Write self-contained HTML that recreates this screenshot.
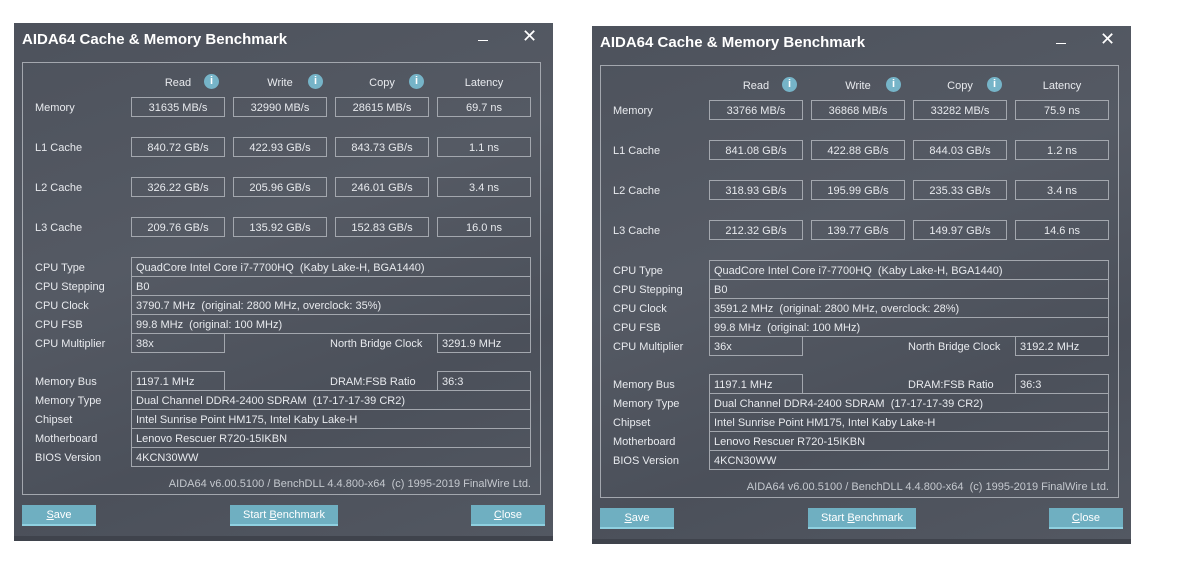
<!DOCTYPE html><html><head><style>
body{margin:0;background:#fff;width:1192px;height:572px;position:relative;overflow:hidden;font-family:"Liberation Sans",sans-serif;font-size:11px;color:#e8eaee}
.w{position:absolute;width:539px;height:518px;background:linear-gradient(160deg,#4d525c 0%,#555a64 40%,#4b505a 70%,#535862 100%);}
.w>div{position:absolute;white-space:nowrap}
.t{left:8px;top:8px;font-size:15px;font-weight:bold;color:#fff}
.x{left:508px;top:3px;font-size:18px;color:#fff}
.m{left:464px;top:17px;width:10px;height:1px;background:#fff}
.g{left:8px;top:39px;width:517px;height:431px;border:1px solid #a3a7ae}
.h{top:54px;width:94px;text-align:center}
.i{top:51px;width:15px;height:15px;border-radius:50%;background:#76b4c8;color:#fff;font-weight:bold;font-size:11px;text-align:center;line-height:15px}
.b{border:1px solid #a3a7ae;line-height:20px;box-sizing:border-box;height:20px}
.v{width:94px;text-align:center}
.l{left:21px;margin-top:2px}
.l2{left:21px;margin-top:1px}
.r{left:117px;width:400px;padding-left:4px;box-sizing:border-box}
.btn{top:482px;height:21px;background:#6fafc1;border-bottom:2px solid #8fd0e0;box-sizing:border-box;text-align:center;line-height:20px;color:#fff}
.f{right:22px;top:455px;color:#c4c8ce}
.s{left:0;top:513px;width:539px;height:5px;background:#3f434c}
.n{margin-top:1px}
</style></head><body>

<div class="w" style="left:14px;top:23px">
<div class="t">AIDA64 Cache &amp; Memory Benchmark</div><div class="m"></div><div class="x">✕</div>
<div class="g"></div>
<div class="h" style="left:117px">Read</div><div class="i" style="left:190px">i</div>
<div class="h" style="left:219px">Write</div><div class="i" style="left:294px">i</div>
<div class="h" style="left:321px">Copy</div><div class="i" style="left:395px">i</div>
<div class="h" style="left:423px">Latency</div>
<div class="l" style="top:77px">Memory</div>
<div class="b v" style="left:117px;top:74px">31635 MB/s</div><div class="b v" style="left:219px;top:74px">32990 MB/s</div><div class="b v" style="left:321px;top:74px">28615 MB/s</div><div class="b v" style="left:423px;top:74px">69.7 ns</div>
<div class="l" style="top:117px">L1 Cache</div>
<div class="b v" style="left:117px;top:114px">840.72 GB/s</div><div class="b v" style="left:219px;top:114px">422.93 GB/s</div><div class="b v" style="left:321px;top:114px">843.73 GB/s</div><div class="b v" style="left:423px;top:114px">1.1 ns</div>
<div class="l" style="top:157px">L2 Cache</div>
<div class="b v" style="left:117px;top:154px">326.22 GB/s</div><div class="b v" style="left:219px;top:154px">205.96 GB/s</div><div class="b v" style="left:321px;top:154px">246.01 GB/s</div><div class="b v" style="left:423px;top:154px">3.4 ns</div>
<div class="l" style="top:197px">L3 Cache</div>
<div class="b v" style="left:117px;top:194px">209.76 GB/s</div><div class="b v" style="left:219px;top:194px">135.92 GB/s</div><div class="b v" style="left:321px;top:194px">152.83 GB/s</div><div class="b v" style="left:423px;top:194px">16.0 ns</div>
<div class="l2" style="top:238px">CPU Type</div><div class="b r" style="top:234px">QuadCore Intel Core i7-7700HQ &nbsp;(Kaby Lake-H, BGA1440)</div>
<div class="l2" style="top:257px">CPU Stepping</div><div class="b r" style="top:253px">B0</div>
<div class="l2" style="top:276px">CPU Clock</div><div class="b r" style="top:272px">3790.7 MHz &nbsp;(original: 2800 MHz, overclock: 35%)</div>
<div class="l2" style="top:295px">CPU FSB</div><div class="b r" style="top:291px">99.8 MHz &nbsp;(original: 100 MHz)</div>
<div class="l2" style="top:314px">CPU Multiplier</div><div class="b r" style="top:310px;width:94px">38x</div><div class="n" style="left:316px;top:314px">North Bridge Clock</div><div class="b r" style="top:310px;left:423px;width:94px">3291.9 MHz</div>
<div class="l2" style="top:352px">Memory Bus</div><div class="b r" style="top:348px;width:94px">1197.1 MHz</div><div class="n" style="left:316px;top:352px">DRAM:FSB Ratio</div><div class="b r" style="top:348px;left:423px;width:94px">36:3</div>
<div class="l2" style="top:371px">Memory Type</div><div class="b r" style="top:367px">Dual Channel DDR4-2400 SDRAM &nbsp;(17-17-17-39 CR2)</div>
<div class="l2" style="top:390px">Chipset</div><div class="b r" style="top:386px">Intel Sunrise Point HM175, Intel Kaby Lake-H</div>
<div class="l2" style="top:409px">Motherboard</div><div class="b r" style="top:405px">Lenovo Rescuer R720-15IKBN</div>
<div class="l2" style="top:428px">BIOS Version</div><div class="b r" style="top:424px">4KCN30WW</div>
<div class="f">AIDA64 v6.00.5100 / BenchDLL 4.4.800-x64 &nbsp;(c) 1995-2019 FinalWire Ltd.</div>
<div class="btn" style="left:8px;width:74px"><u>S</u>ave</div>
<div class="btn" style="left:216px;width:108px">Start <u>B</u>enchmark</div>
<div class="btn" style="left:457px;width:74px"><u>C</u>lose</div>
<div class="s"></div>
</div>

<div class="w" style="left:592px;top:26px">
<div class="t">AIDA64 Cache &amp; Memory Benchmark</div><div class="m"></div><div class="x">✕</div>
<div class="g"></div>
<div class="h" style="left:117px">Read</div><div class="i" style="left:190px">i</div>
<div class="h" style="left:219px">Write</div><div class="i" style="left:294px">i</div>
<div class="h" style="left:321px">Copy</div><div class="i" style="left:395px">i</div>
<div class="h" style="left:423px">Latency</div>
<div class="l" style="top:77px">Memory</div>
<div class="b v" style="left:117px;top:74px">33766 MB/s</div><div class="b v" style="left:219px;top:74px">36868 MB/s</div><div class="b v" style="left:321px;top:74px">33282 MB/s</div><div class="b v" style="left:423px;top:74px">75.9 ns</div>
<div class="l" style="top:117px">L1 Cache</div>
<div class="b v" style="left:117px;top:114px">841.08 GB/s</div><div class="b v" style="left:219px;top:114px">422.88 GB/s</div><div class="b v" style="left:321px;top:114px">844.03 GB/s</div><div class="b v" style="left:423px;top:114px">1.2 ns</div>
<div class="l" style="top:157px">L2 Cache</div>
<div class="b v" style="left:117px;top:154px">318.93 GB/s</div><div class="b v" style="left:219px;top:154px">195.99 GB/s</div><div class="b v" style="left:321px;top:154px">235.33 GB/s</div><div class="b v" style="left:423px;top:154px">3.4 ns</div>
<div class="l" style="top:197px">L3 Cache</div>
<div class="b v" style="left:117px;top:194px">212.32 GB/s</div><div class="b v" style="left:219px;top:194px">139.77 GB/s</div><div class="b v" style="left:321px;top:194px">149.97 GB/s</div><div class="b v" style="left:423px;top:194px">14.6 ns</div>
<div class="l2" style="top:238px">CPU Type</div><div class="b r" style="top:234px">QuadCore Intel Core i7-7700HQ &nbsp;(Kaby Lake-H, BGA1440)</div>
<div class="l2" style="top:257px">CPU Stepping</div><div class="b r" style="top:253px">B0</div>
<div class="l2" style="top:276px">CPU Clock</div><div class="b r" style="top:272px">3591.2 MHz &nbsp;(original: 2800 MHz, overclock: 28%)</div>
<div class="l2" style="top:295px">CPU FSB</div><div class="b r" style="top:291px">99.8 MHz &nbsp;(original: 100 MHz)</div>
<div class="l2" style="top:314px">CPU Multiplier</div><div class="b r" style="top:310px;width:94px">36x</div><div class="n" style="left:316px;top:314px">North Bridge Clock</div><div class="b r" style="top:310px;left:423px;width:94px">3192.2 MHz</div>
<div class="l2" style="top:352px">Memory Bus</div><div class="b r" style="top:348px;width:94px">1197.1 MHz</div><div class="n" style="left:316px;top:352px">DRAM:FSB Ratio</div><div class="b r" style="top:348px;left:423px;width:94px">36:3</div>
<div class="l2" style="top:371px">Memory Type</div><div class="b r" style="top:367px">Dual Channel DDR4-2400 SDRAM &nbsp;(17-17-17-39 CR2)</div>
<div class="l2" style="top:390px">Chipset</div><div class="b r" style="top:386px">Intel Sunrise Point HM175, Intel Kaby Lake-H</div>
<div class="l2" style="top:409px">Motherboard</div><div class="b r" style="top:405px">Lenovo Rescuer R720-15IKBN</div>
<div class="l2" style="top:428px">BIOS Version</div><div class="b r" style="top:424px">4KCN30WW</div>
<div class="f">AIDA64 v6.00.5100 / BenchDLL 4.4.800-x64 &nbsp;(c) 1995-2019 FinalWire Ltd.</div>
<div class="btn" style="left:8px;width:74px"><u>S</u>ave</div>
<div class="btn" style="left:216px;width:108px">Start <u>B</u>enchmark</div>
<div class="btn" style="left:457px;width:74px"><u>C</u>lose</div>
<div class="s"></div>
</div>
</body></html>
